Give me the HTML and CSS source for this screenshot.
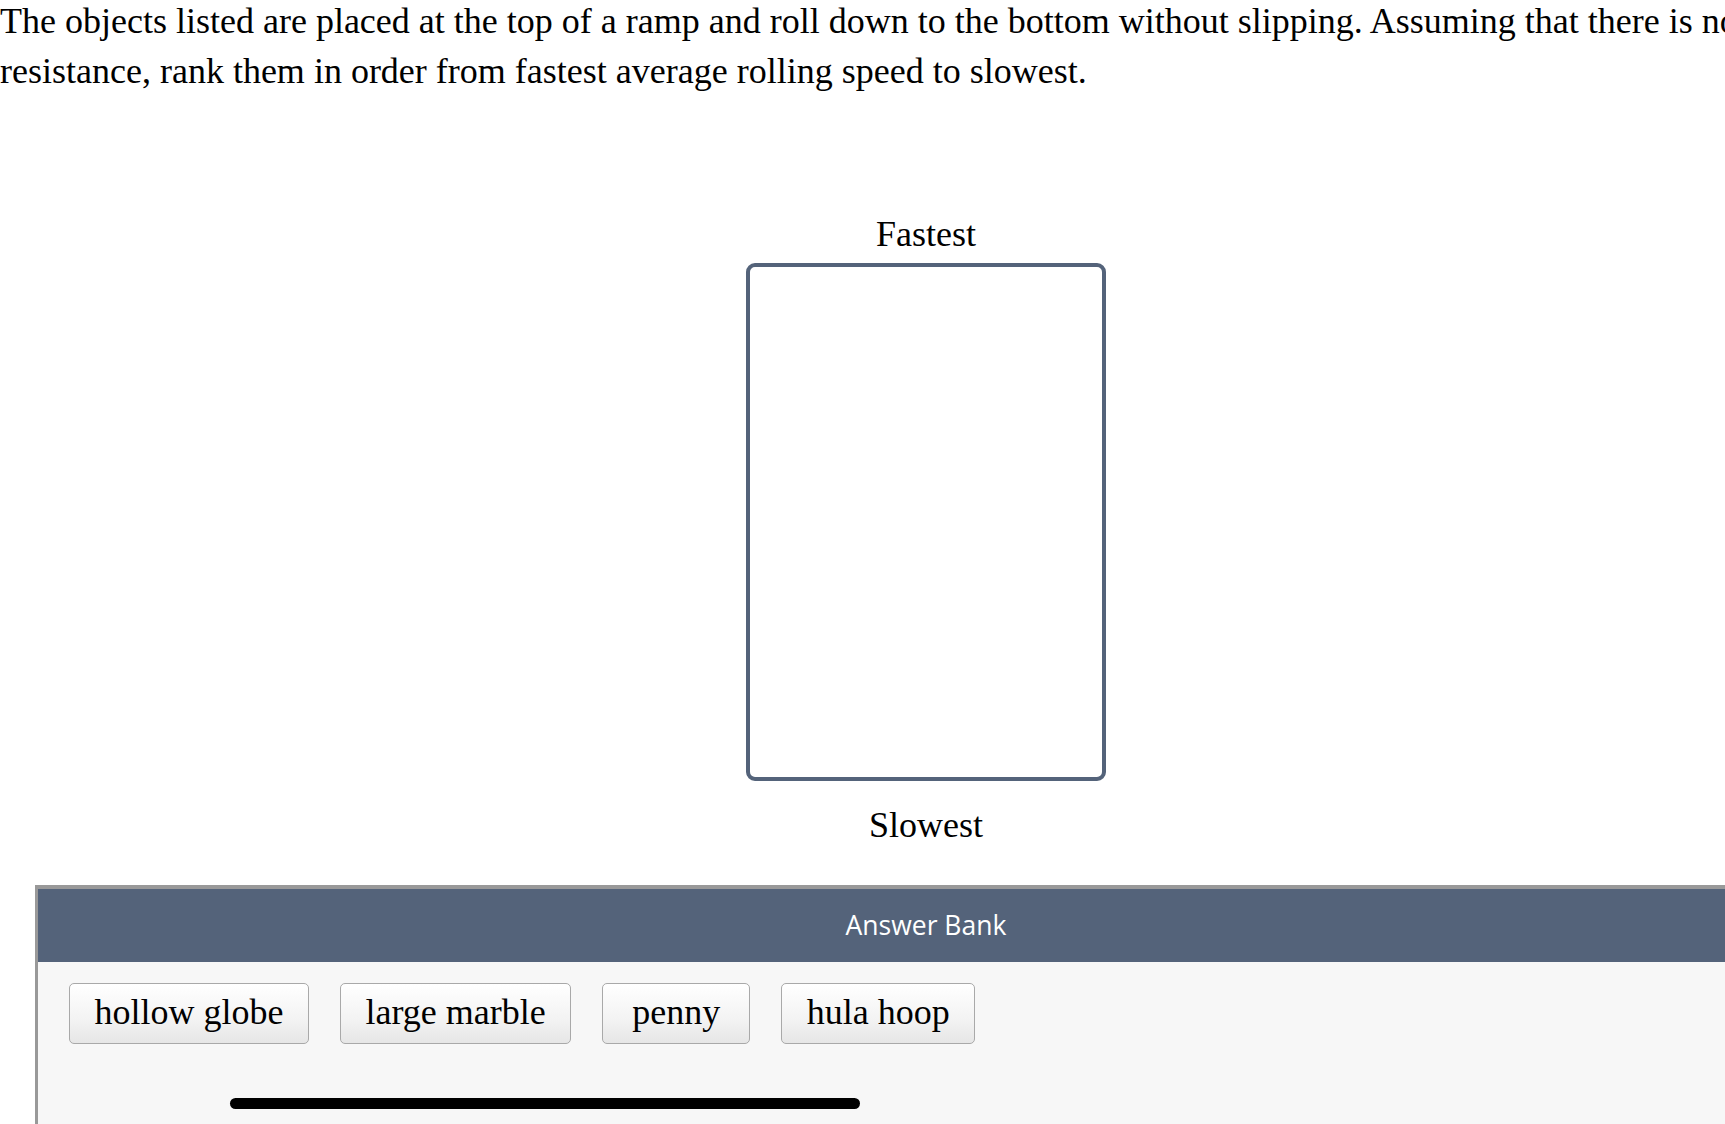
FILE: index.html
```html
<!DOCTYPE html>
<html lang="en">
<head>
<meta charset="utf-8">
<title>Ranking question</title>
<link rel="stylesheet" href="styles.css">
</head>
<body>
<div class="page">
  <p class="question">The objects listed are placed at the top of a ramp and roll down to the bottom without slipping. Assuming that there is no air resistance, rank them in order from fastest average rolling speed to slowest.</p>
  <div class="ranking">
    <div class="rank-label">Fastest</div>
    <div class="drop-box"></div>
    <div class="rank-label rank-label-bottom">Slowest</div>
  </div>
  <div class="bank">
    <div class="bank-header">Answer Bank</div>
    <div class="bank-body">
      <div class="chip">hollow globe</div>
      <div class="chip">large marble</div>
      <div class="chip">penny</div>
      <div class="chip">hula hoop</div>
    </div>
  </div>
</div>
<div class="scrollbar"></div>
</body>
</html>
```
FILE: styles.css
```css
html, body {
  margin: 0;
  padding: 0;
  background: #ffffff;
  overflow: hidden;
}

body {
  font-family: "Liberation Serif", "Times New Roman", serif;
  color: #000;
}

.page {
  width: 1852px;
}

.question {
  margin: -4px 0 0 0;
  font-size: 36px;
  line-height: 50px;
}

.ranking {
  display: flex;
  flex-direction: column;
  align-items: center;
  padding-top: 113px;
}

.rank-label {
  font-size: 36px;
  line-height: 50px;
  margin-bottom: 4px;
}

.rank-label-bottom {
  margin-top: 19px;
  margin-bottom: 0;
}

.drop-box {
  width: 352px;
  height: 510px;
  border: 4px solid #54637a;
  border-radius: 9px;
  background: #fff;
}

.bank {
  margin: 35px 35px 0 35px;
  border-top: 4px solid #999999;
  border-left: 3px solid #999999;
  border-right: 3px solid #999999;
}

.bank-header {
  box-sizing: border-box;
  height: 73px;
  padding-bottom: 2px;
  background: #54637a;
  color: #ffffff;
  font-family: "Open Sans", "Noto Sans", sans-serif;
  font-size: 26.5px;
  display: flex;
  align-items: center;
  justify-content: center;
}

.bank-body {
  background: #f7f7f7;
  min-height: 300px;
  padding: 21px 31px 0 31px;
  display: flex;
  align-items: flex-start;
  gap: 31px;
}

.chip {
  box-sizing: border-box;
  height: 61px;
  min-width: 148px;
  padding: 0 24.5px;
  border: 1.5px solid #a9a9a9;
  border-radius: 5px;
  background: linear-gradient(to bottom, #ffffff 0%, #f3f3f3 60%, #e6e6e6 100%);
  font-size: 36px;
  line-height: 56px;
  text-align: center;
  white-space: nowrap;
}

.scrollbar {
  position: absolute;
  left: 230px;
  top: 1098px;
  width: 630px;
  height: 11px;
  border-radius: 6px;
  background: #000;
}
```
